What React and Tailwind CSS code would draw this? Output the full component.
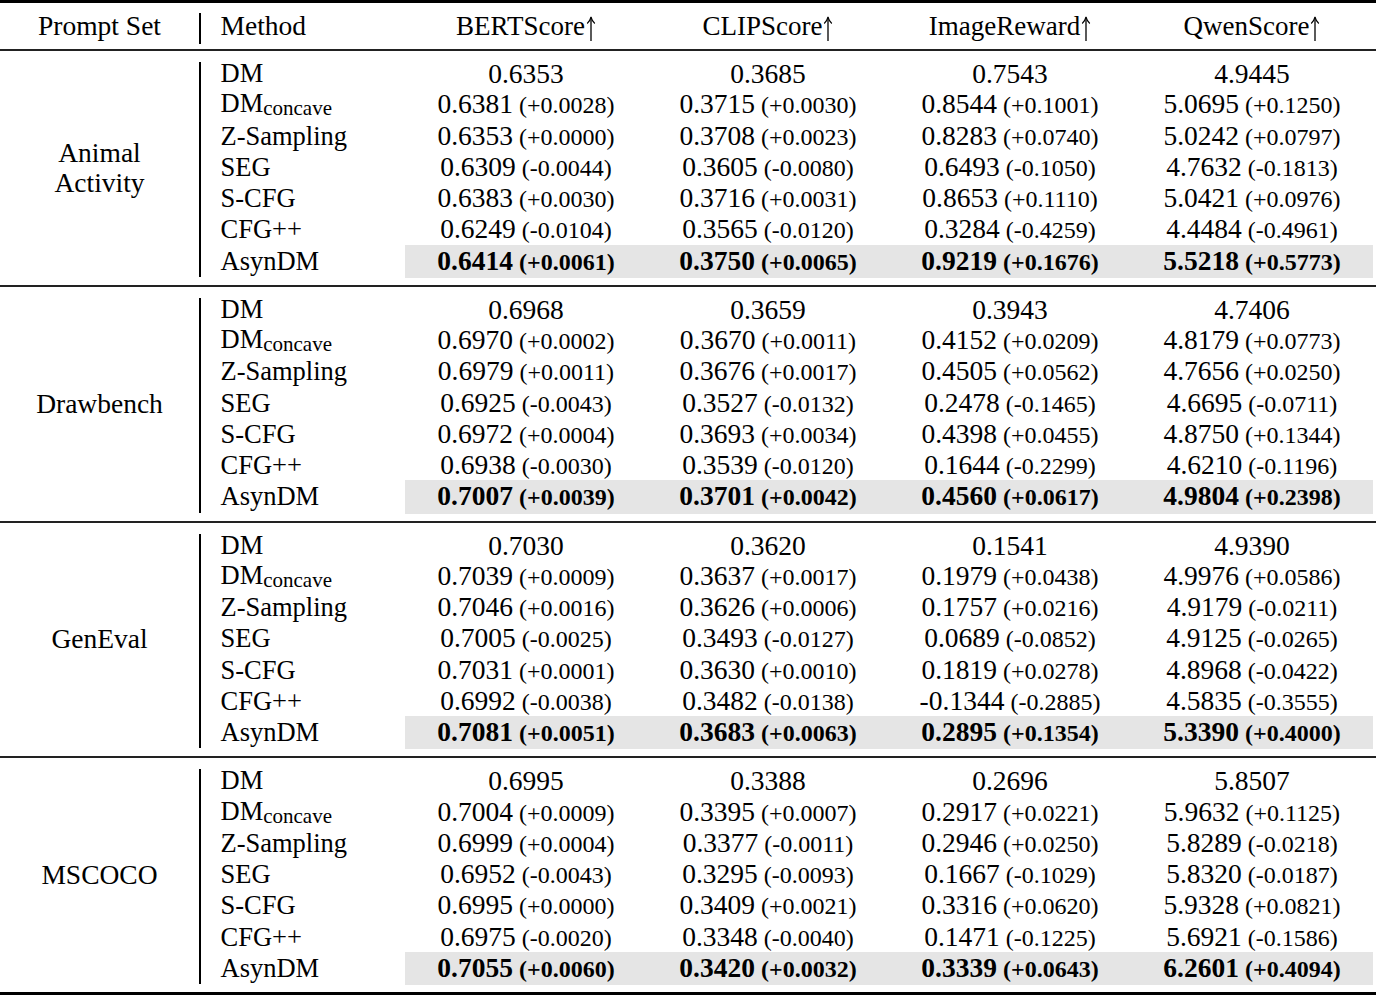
import React from "react";

const cols = ["BERTScore", "CLIPScore", "ImageReward", "QwenScore"];
const methods = ["DM", "DMc", "Z-Sampling", "SEG", "S-CFG", "CFG++", "AsynDM"];

const groups = [
  {
    name: ["Animal", "Activity"],
    rows: [
      ["0.6353", "0.3685", "0.7543", "4.9445"],
      ["0.6381 (+0.0028)", "0.3715 (+0.0030)", "0.8544 (+0.1001)", "5.0695 (+0.1250)"],
      ["0.6353 (+0.0000)", "0.3708 (+0.0023)", "0.8283 (+0.0740)", "5.0242 (+0.0797)"],
      ["0.6309 (-0.0044)", "0.3605 (-0.0080)", "0.6493 (-0.1050)", "4.7632 (-0.1813)"],
      ["0.6383 (+0.0030)", "0.3716 (+0.0031)", "0.8653 (+0.1110)", "5.0421 (+0.0976)"],
      ["0.6249 (-0.0104)", "0.3565 (-0.0120)", "0.3284 (-0.4259)", "4.4484 (-0.4961)"],
      ["0.6414 (+0.0061)", "0.3750 (+0.0065)", "0.9219 (+0.1676)", "5.5218 (+0.5773)"],
    ],
  },
  {
    name: ["Drawbench"],
    rows: [
      ["0.6968", "0.3659", "0.3943", "4.7406"],
      ["0.6970 (+0.0002)", "0.3670 (+0.0011)", "0.4152 (+0.0209)", "4.8179 (+0.0773)"],
      ["0.6979 (+0.0011)", "0.3676 (+0.0017)", "0.4505 (+0.0562)", "4.7656 (+0.0250)"],
      ["0.6925 (-0.0043)", "0.3527 (-0.0132)", "0.2478 (-0.1465)", "4.6695 (-0.0711)"],
      ["0.6972 (+0.0004)", "0.3693 (+0.0034)", "0.4398 (+0.0455)", "4.8750 (+0.1344)"],
      ["0.6938 (-0.0030)", "0.3539 (-0.0120)", "0.1644 (-0.2299)", "4.6210 (-0.1196)"],
      ["0.7007 (+0.0039)", "0.3701 (+0.0042)", "0.4560 (+0.0617)", "4.9804 (+0.2398)"],
    ],
  },
  {
    name: ["GenEval"],
    rows: [
      ["0.7030", "0.3620", "0.1541", "4.9390"],
      ["0.7039 (+0.0009)", "0.3637 (+0.0017)", "0.1979 (+0.0438)", "4.9976 (+0.0586)"],
      ["0.7046 (+0.0016)", "0.3626 (+0.0006)", "0.1757 (+0.0216)", "4.9179 (-0.0211)"],
      ["0.7005 (-0.0025)", "0.3493 (-0.0127)", "0.0689 (-0.0852)", "4.9125 (-0.0265)"],
      ["0.7031 (+0.0001)", "0.3630 (+0.0010)", "0.1819 (+0.0278)", "4.8968 (-0.0422)"],
      ["0.6992 (-0.0038)", "0.3482 (-0.0138)", "-0.1344 (-0.2885)", "4.5835 (-0.3555)"],
      ["0.7081 (+0.0051)", "0.3683 (+0.0063)", "0.2895 (+0.1354)", "5.3390 (+0.4000)"],
    ],
  },
  {
    name: ["MSCOCO"],
    rows: [
      ["0.6995", "0.3388", "0.2696", "5.8507"],
      ["0.7004 (+0.0009)", "0.3395 (+0.0007)", "0.2917 (+0.0221)", "5.9632 (+0.1125)"],
      ["0.6999 (+0.0004)", "0.3377 (-0.0011)", "0.2946 (+0.0250)", "5.8289 (-0.0218)"],
      ["0.6952 (-0.0043)", "0.3295 (-0.0093)", "0.1667 (-0.1029)", "5.8320 (-0.0187)"],
      ["0.6995 (+0.0000)", "0.3409 (+0.0021)", "0.3316 (+0.0620)", "5.9328 (+0.0821)"],
      ["0.6975 (-0.0020)", "0.3348 (-0.0040)", "0.1471 (-0.1225)", "5.6921 (-0.1586)"],
      ["0.7055 (+0.0060)", "0.3420 (+0.0032)", "0.3339 (+0.0643)", "6.2601 (+0.4094)"],
    ],
  },
];

// the up arrow after each metric name
function UpArrow() {
  return (
    <svg width="10" height="25" viewBox="0 0 10 25" className="inline-block align-[-6px] ml-[1px]">
      <path d="M5 1.5 V25" stroke="#000" strokeWidth="1.3" fill="none" />
      <path d="M1.2 7.5 Q4 5 5 1 Q6 5 8.8 7.5" stroke="#000" strokeWidth="1.1" fill="none" />
    </svg>
  );
}

function MethodName({ m }) {
  if (m === "DMc") {
    return (
      <span>
        DM<span className="text-[21px] relative top-[3px]">concave</span>
      </span>
    );
  }
  return <span>{m}</span>;
}

function Cell({ value, bold }) {
  const [main, delta] = value.split(" ");
  return (
    <div className={`w-[242px] text-center text-[27.5px] ${bold ? "font-bold bg-[#e5e5e5]" : ""}`}>
      {main}
      {delta && <span className="text-[24px]"> {delta}</span>}
    </div>
  );
}

function Group({ group }) {
  return (
    <div className="flex h-[233.75px]">
      <div className="w-[199px] flex flex-col items-center justify-center text-[27.5px] leading-[30px]">
        {group.name.map((n) => (
          <div key={n}>{n}</div>
        ))}
      </div>
      <div className="w-[1.5px] bg-black mt-[11px] mb-[8px]" />
      <div className="flex-1 pt-[7px] pb-[8px]">
        {group.rows.map((r, i) => (
          <div key={i} className="flex h-[31.25px] items-center leading-[31.25px]">
            <div className="w-[204.5px] pl-[20px] text-[26.5px]">
              <MethodName m={methods[i]} />
            </div>
            {r.map((v, j) => (
              <Cell key={j} value={v} bold={i === 6} />
            ))}
          </div>
        ))}
      </div>
    </div>
  );
}

export default function App() {
  return (
    <div className="w-[1376px] h-[995px] bg-white text-black text-[27px] font-['Liberation_Serif',serif] overflow-hidden">
      <div className="h-[3px] bg-black" />
      <div className="flex h-[46px] items-center leading-[32px]">
        <div className="w-[199px] text-center text-[27.5px]">Prompt Set</div>
        <div className="w-[1.5px] self-stretch bg-black mt-[10px] mb-[5px]" />
        <div className="w-[204.5px] pl-[20px] text-[27.5px]">Method</div>
        {cols.map((c) => (
          <div key={c} className="w-[242px] text-center text-[27px]">
            {c}
            <UpArrow />
          </div>
        ))}
      </div>
      <div className="h-[2px] bg-[#222]" />
      {groups.map((g, i) => (
        <React.Fragment key={i}>
          {i > 0 && <div className="h-[2px] bg-[#222]" />}
          <Group group={g} />
        </React.Fragment>
      ))}
      <div className="h-[3px] bg-black" />
    </div>
  );
}
